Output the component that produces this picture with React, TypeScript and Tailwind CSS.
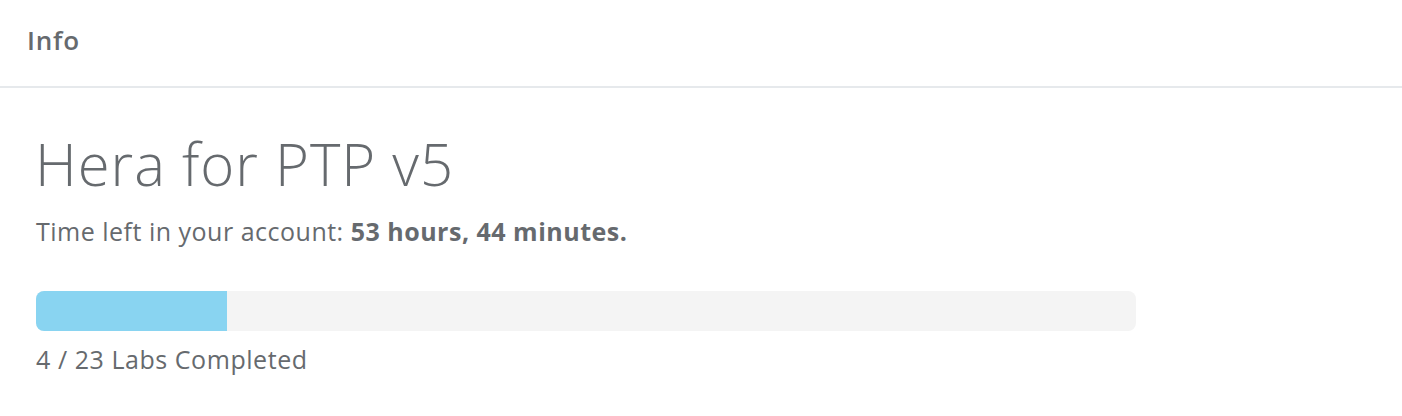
export default function App() {
  const done = 4;
  const total = 23;
  const pct = (done / total) * 100;

  return (
    <div
      className="min-h-[416px] w-full bg-white text-[#666a6e]"
      style={{ fontFamily: '"Open Sans", sans-serif' }}
    >
      {/* Header */}
      <div className="h-[88px] flex items-center pl-[27px] border-b-2 border-[#e6e9ec]">
        <h2 className="text-[26px] font-semibold leading-none pb-[7px] tracking-[0.8px]">Info</h2>
      </div>

      {/* Body */}
      <div className="pl-[36px] pt-[44px]">
        <h1 className="text-[58px] font-light leading-[64px] -ml-[1px] tracking-[1px]">
          Hera for PTP v5
        </h1>
        <p className="text-[25px] leading-[30px] mt-[20px] tracking-[0.5px]">
          Time left in your account: <strong className="font-bold">53 hours, 44 minutes.</strong>
        </p>
        <div className="mt-[45px] w-[1100px] h-[40px] rounded-[8px] bg-[#f4f4f4] overflow-hidden">
          <div className="h-full bg-[#89d4f1]" style={{ width: `${pct}%` }} />
        </div>
        <p className="text-[25px] leading-[30px] mt-[13px] tracking-[0.55px]">
          {done} / {total} Labs Completed
        </p>
      </div>
    </div>
  );
}
